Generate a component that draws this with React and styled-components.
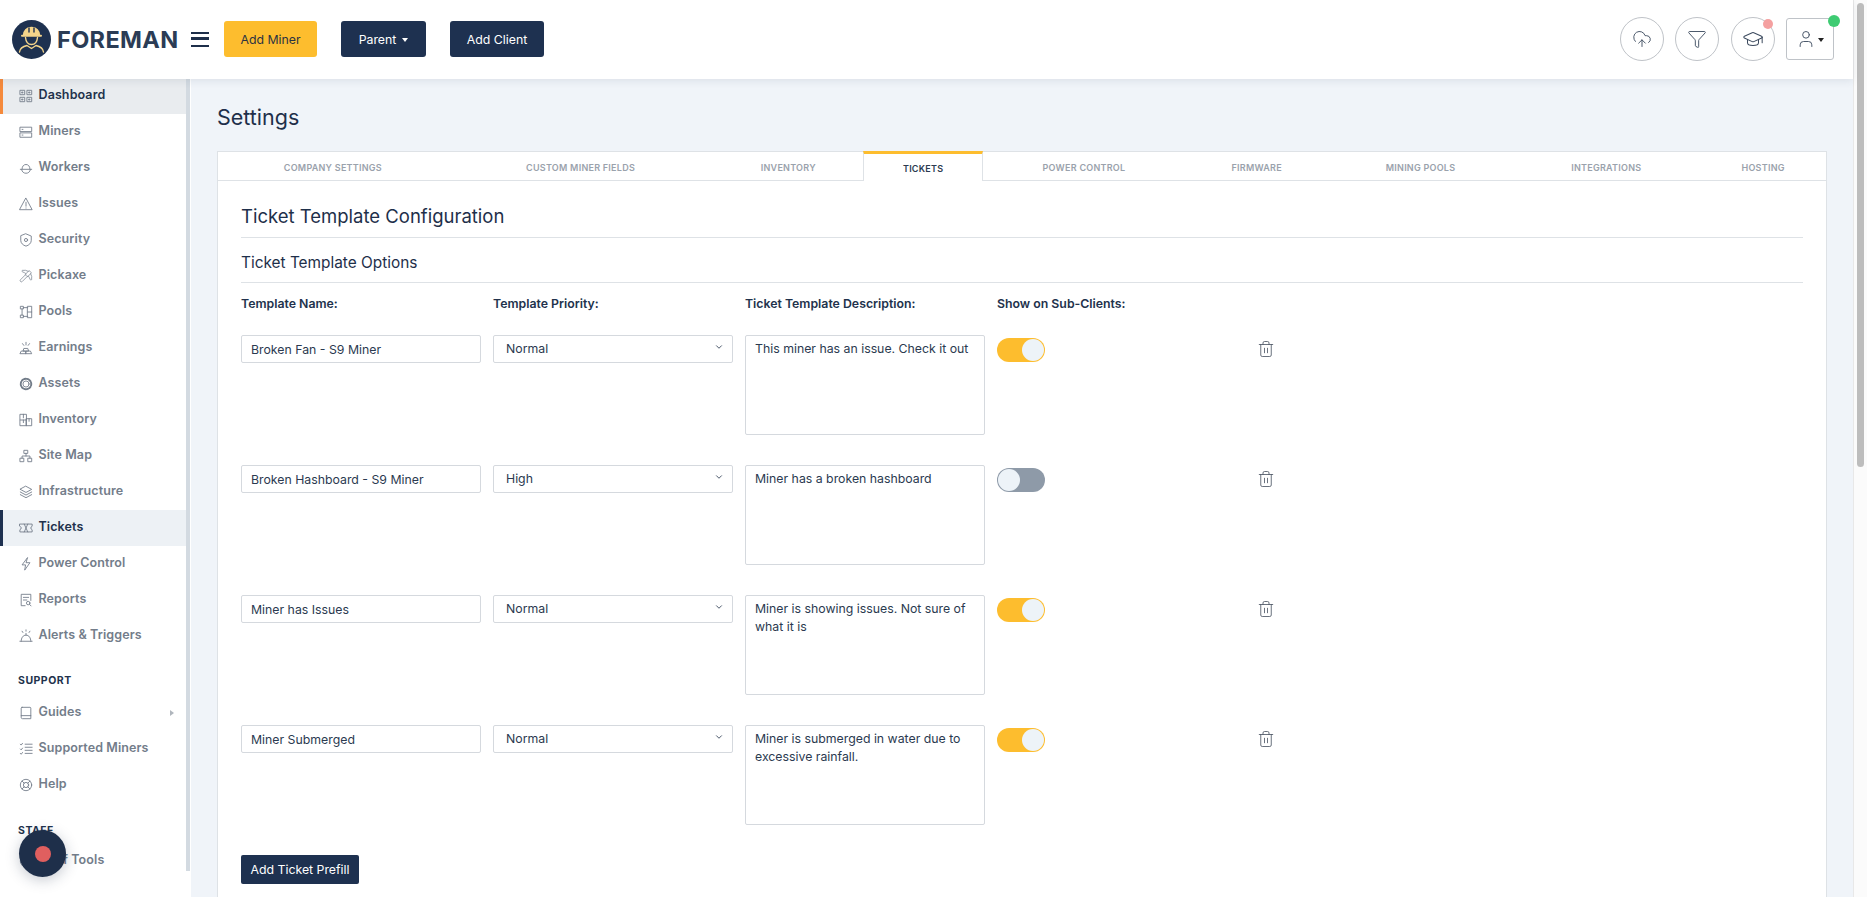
import React from "react";
import styled, { createGlobalStyle } from "styled-components";
import { CloudUpload, Funnel, GraduationCap, Pickaxe, Trash2, User, ChevronDown } from "lucide-react";

const GlobalStyle = createGlobalStyle`
  html, body {
    margin: 0;
    height: 100%;
    overflow: hidden;
    font-family: Inter, "Liberation Sans", sans-serif;
    color: #1e2f4a;
  }
  * { box-sizing: border-box; }
`;

const Shell = styled.div`
  display: flex;
  height: 897px;
  overflow: hidden;
  background: #f0f4f9;
`;

const Page = styled.div`
  flex: 1;
  min-width: 0;
  display: flex;
  flex-direction: column;
`;

const PageTrack = styled.div`
  width: 14px;
  padding: 3px 3px 0;
  background: #fbfbfb;
  border-left: 1px solid #e8e8e8;
`;

const PageThumb = styled.div`
  height: 464px;
  border-radius: 4px;
  background: #bdbdbd;
`;

const Header = styled.header`
  position: relative;
  z-index: 2;
  flex: none;
  height: 79px;
  display: flex;
  align-items: center;
  padding: 0 19px 1px 12px;
  background: #fff;
  box-shadow: 0 2px 8px rgba(40, 60, 90, 0.1);
`;

const Brand = styled.div`
  display: flex;
  align-items: center;
  gap: 6px;
  margin-right: 13px;
`;

const BrandName = styled.span`
  width: 121px;
  font-size: 23.5px;
  font-weight: 700;
  letter-spacing: 0.35px;
  white-space: nowrap;
  color: #2b3c55;
`;

const Burger = styled.div`
  width: 18px;
  height: 15px;
  margin-right: 15px;
  border-top: 2.5px solid #1e2f4a;
  border-bottom: 2.5px solid #1e2f4a;
  position: relative;

  &::after {
    content: "";
    position: absolute;
    left: 0;
    right: 0;
    top: 3.5px;
    height: 2.5px;
    background: #1e2f4a;
  }
`;

const TopButton = styled.button`
  height: 36px;
  width: ${(p) => p.$width}px;
  margin-right: 24px;
  border: 0;
  border-radius: 3px;
  font: 400 12.3px Inter, sans-serif;
  color: ${(p) => (p.$yellow ? "#2b3242" : "#fff")};
  background: ${(p) => (p.$yellow ? "#fdbd2e" : "#1e3150")};
  display: flex;
  align-items: center;
  justify-content: center;
  gap: 6px;
`;

const Caret = styled.span`
  width: 0;
  height: 0;
  border-left: 3px solid transparent;
  border-right: 3px solid transparent;
  border-top: 4px solid ${(p) => p.$color};
  margin-top: 2px;
`;

const HeaderTools = styled.div`
  margin-left: auto;
  display: flex;
  align-items: center;
  gap: 11.5px;
`;

const RoundTool = styled.div`
  position: relative;
  width: 44px;
  height: 44px;
  border: 1px solid #bfc3c8;
  border-radius: 50%;
  display: flex;
  align-items: center;
  justify-content: center;
  color: #3c4a5e;
`;

const UserBox = styled.div`
  position: relative;
  width: 48px;
  height: 42px;
  border: 1px solid #bfc3c8;
  border-radius: 3px;
  display: flex;
  align-items: center;
  justify-content: center;
  gap: 2px;
  color: #3c4a5e;
`;

const Dot = styled.span`
  position: absolute;
  width: ${(p) => p.$size}px;
  height: ${(p) => p.$size}px;
  top: ${(p) => p.$top}px;
  right: ${(p) => p.$right}px;
  border-radius: 50%;
  background: ${(p) => p.$color};
`;

const Body = styled.div`
  flex: 1;
  min-height: 0;
  display: flex;
`;

const Sidebar = styled.aside`
  flex: none;
  width: 191px;
  display: flex;
  background: #fff;
  margin-top: -1px;
`;

const SideList = styled.nav`
  width: 186px;
`;

const SideBar = styled.div`
  width: 4px;
  height: 793px;
  background: #d3dae1;
`;

const NavRow = styled.div`
  height: 36px;
  display: flex;
  align-items: center;
  gap: 5.5px;
  padding-left: ${(p) => (p.$accent ? 16 : 19)}px;
  border-left: ${(p) => (p.$accent ? `3px solid ${p.$accent}` : "0")};
  background: ${(p) => p.$bg || "transparent"};
  color: ${(p) => (p.$accent ? "#22324c" : "#737d8a")};
  font-size: 12.5px;
  font-weight: 600;
  letter-spacing: 0.1px;

  svg {
    flex: none;
    color: #727c89;
  }
`;

const NavLabel = styled.span`
  padding-bottom: 4px;
`;

const NavArrow = styled.span`
  margin-left: auto;
  margin-right: 12px;
  width: 0;
  height: 0;
  border-top: 3px solid transparent;
  border-bottom: 3px solid transparent;
  border-left: 4px solid #b0b6bd;
`;

const NavHeading = styled.div`
  padding-left: 18px;
  font-size: 10.5px;
  font-weight: 700;
  letter-spacing: 0.5px;
  line-height: 14px;
  color: #22324c;
  margin: ${(p) => p.$margin};
`;

const RecordButton = styled.div`
  position: fixed;
  left: 19px;
  top: 830px;
  z-index: 3;
  width: 47px;
  height: 47px;
  border-radius: 50%;
  background: #1e2f4a;
  box-shadow: 0 3px 14px rgba(30, 47, 74, 0.25);
  display: flex;
  align-items: center;
  justify-content: center;

  &::after {
    content: "";
    width: 16px;
    height: 16px;
    border-radius: 50%;
    background: #e05f5f;
  }
`;

const Main = styled.main`
  flex: 1;
  min-width: 0;
  padding: 24px 26px 0;
  overflow: hidden;
`;

const PageTitle = styled.h1`
  margin: 0 0 20px;
  font-size: 21.5px;
  line-height: 28px;
  font-weight: 400;
  color: #1e2f4a;
`;

const Panel = styled.section`
  background: #fff;
  border: 1px solid #dee2e6;
  padding-bottom: 40px;
`;

const Tabs = styled.div`
  display: flex;
  height: 29px;
  border-bottom: 1px solid #dee2e6;
`;

const Tab = styled.div`
  flex: ${(p) => p.$width} 1 0;
  display: flex;
  align-items: center;
  justify-content: center;
  height: ${(p) => (p.$active ? "30px" : "28px")};
  margin-top: ${(p) => (p.$active ? "-1px" : "0")};
  padding-top: ${(p) => (p.$active ? "1px" : "3px")};
  background: #fff;
  border-top: ${(p) => (p.$active ? "3px solid #fdbd2e" : "0")};
  border-left: ${(p) => (p.$active ? "1px solid #dee2e6" : "0")};
  border-right: ${(p) => (p.$active ? "1px solid #dee2e6" : "0")};
  color: ${(p) => (p.$active ? "#2b3a50" : "#9aa2ac")};
  font-size: 9px;
  font-weight: 600;
  letter-spacing: 0.25px;
  text-transform: uppercase;
`;

const Content = styled.div`
  padding: 23px 23px 0;
`;

const ConfigTitle = styled.h2`
  margin: 0 0 9px;
  font-size: 18.5px;
  line-height: 24px;
  font-weight: 400;
  color: #1e2f4a;
`;

const OptionsTitle = styled.h3`
  margin: 13px 0 7px;
  font-size: 15.4px;
  line-height: 24px;
  font-weight: 400;
  color: #1e2f4a;
`;

const Rule = styled.hr`
  margin: 0;
  border: 0;
  height: 1px;
  background: #dee2e6;
`;

const Grid = styled.div`
  display: grid;
  grid-template-columns: repeat(4, 240px) 60px;
  column-gap: 12px;
  margin-bottom: ${(p) => p.$gap}px;
`;

const ColumnLabel = styled.div`
  margin-top: 13px;
  font-size: 12.3px;
  line-height: 16px;
  font-weight: 600;
  color: #22324c;
`;

const fieldStyles = `
  width: 100%;
  border: 1px solid #d5d9de;
  border-radius: 2px;
  background: #fff;
  font: 400 12.3px/18px Inter, sans-serif;
  color: #2b3a50;
  outline: none;
`;

const TextInput = styled.input`
  ${fieldStyles}
  display: block;
  height: 28px;
  padding: 0 9px;
`;

const SelectWrap = styled.div`
  position: relative;
  height: 28px;

  svg {
    position: absolute;
    right: 9px;
    top: 7px;
    color: #3c4a5e;
  }
`;

const Select = styled.select`
  ${fieldStyles}
  appearance: none;
  height: 28px;
  padding: 0 12px;
`;

const TextArea = styled.textarea`
  ${fieldStyles}
  display: block;
  height: 100px;
  padding: 4px 9px;
  resize: none;
  overflow: hidden;
`;

const Toggle = styled.div`
  width: 48px;
  height: 24px;
  margin-top: 2.5px;
  border-radius: 12px;
  padding: 1px;
  display: flex;
  justify-content: ${(p) => (p.$on ? "flex-end" : "flex-start")};
  background: ${(p) => (p.$on ? "#fdbd2e" : "#8e9aa8")};

  &::after {
    content: "";
    width: 22px;
    height: 22px;
    border-radius: 50%;
    background: #edf3f8;
  }
`;

const TrashCell = styled.div`
  padding: 5px 0 0 8px;
  color: #4a5462;
`;

const AddButton = styled.button`
  display: block;
  width: 118px;
  height: 29px;
  margin-top: 1px;
  border: 0;
  border-radius: 2px;
  background: #1e3150;
  color: #fff;
  font: 400 12.3px Inter, sans-serif;
`;

const Logo = () => (
  <svg width="39" height="39" viewBox="0 0 39 39" fill="none">
    <circle cx="19.5" cy="19.5" r="19.5" fill="#1e3150" />
    <g stroke="#f4d48a" strokeWidth="1.4" strokeLinecap="round" strokeLinejoin="round">
      <path d="M11.5 15.5c0-4.6 3.3-8 8-8s8 3.4 8 8" fill="#f4d48a" />
      <path d="M10 15.8h19" strokeWidth="2" />
      <path d="M17 8v4M22 8v4" stroke="#1e3150" />
      <path d="M13.5 17.5c.4 4.5 2.8 7 6 7s5.6-2.5 6-7" />
      <path d="M7.5 32c.5-3.8 3-5.5 7.5-6.5l4.5 3 4.5-3c4.5 1 7 2.7 7.5 6.5" />
    </g>
  </svg>
);

const Ico = ({ children }) => (
  <svg width="14" height="14" viewBox="0 0 16 16" fill="none" stroke="currentColor" strokeWidth="1" strokeLinecap="round" strokeLinejoin="round">
    {children}
  </svg>
);

const icons = {
  dashboard: (
    <>
      <path d="M1.5 1.5h5v5h-5zM9.5 1.5h5v5h-5zM1.5 9.5h5v5h-5zM9.5 9.500h5v5h-5z" />
      <path d="M3.5 3.5h1v1h-1zM11.5 3.5h1v1h-1zM3.5 11.5h1v1h-1zM11.5 11.5h1v1h-1z" />
    </>
  ),
  miners: <path d="M1.5 2.5h13v5h-13zM1.5 9h13v5h-13zM3.5 5h1M3.5 11.5h1" />,
  workers: (
    <>
      <path d="M3.5 9c0-3 2-5 4.5-5s4.5 2 4.5 5M1.5 9.5h13" />
      <path d="M3 10c.5 2.5 2.5 4 5 4s4.5-1.500 5-4" />
    </>
  ),
  issues: <path d="M8 1.5L15 14.5H1zM8 6v4.5M8 12.5v.2" />,
  security: (
    <>
      <path d="M8 1l6 2.5v5c0 3-2.5 5.5-6 6.5-3.5-1-6-3.5-6-6.5v-5z" />
      <circle cx="8" cy="8" r="1.8" />
    </>
  ),
  pools: (
    <>
      <path d="M2 1.5h3v3h-3zM2 11.5h3v3h-3zM10 1.5h4.5v13h-4.5zM5 3h5M5 13h5M3.5 4.5v7" />
      <path d="M10 8h4.5" />
    </>
  ),
  earnings: (
    <>
      <path d="M6 8.5h4l1 3h-6zM3 11.5h4.5l.5 3h-6.5zM8.5 11.5h4.5l1.5 3h-6.5z" />
      <path d="M8 1.5v3M4 3l1.5 2M12 3l-1.5 2" />
    </>
  ),
  assets: (
    <>
      <circle cx="8" cy="8" r="3.5" />
      <circle cx="8" cy="8" r="6" strokeDasharray="1.8 1.4" strokeWidth="2.2" />
    </>
  ),
  inventory: <path d="M1.5 1.5h7v13h-7zM8.5 6.5h6v8h-6zM1.5 8h7M5 1.5v4M11.5 6.5v3M5 8v3" />,
  sitemap: (
    <path d="M6 1.5h4v3.5h-4zM1.5 10.5h4v4h-4zM10.5 10.5h4v4h-4zM3.5 10.5v-2.5h9v2.5M8 5v3" />
  ),
  infra: <path d="M8 1.5l6.5 3.5-6.5 3.5-6.5-3.5zM1.5 8l6.5 3.5 6.5-3.5M1.5 11l6.5 3.5 6.5-3.5" />,
  tickets: (
    <path d="M1 3.5h14v2.5c-1 .5-1.5 1-1.5 2s.5 1.5 1.5 2v2.5h-14v-2.5c1-.5 1.5-1 1.5-2s-.5-1.5-1.5-2zM6 3.5l4 9M10 3.5l-4 9" />
  ),
  power: <path d="M9.5 1L3.5 9h4l-1 6 6-8.5h-4z" />,
  reports: (
    <>
      <path d="M7 14.5h-4.5v-13h11v7M5 5h6M5 8h4" />
      <circle cx="10.5" cy="11.5" r="2" />
      <path d="M12 13l1.8 1.8" />
    </>
  ),
  alerts: (
    <path d="M1 14h14M2.5 14c0-4 2.2-7 5.5-7s5.500 3 5.500 7M8 5v2M8 1v1.5M3.5 2.5l1 1.5M12.5 2.5l-1 1.5" />
  ),
  guides: <path d="M3.5 1.5h9a1 1 0 0 1 1 1v12h-9.5a1.5 1.5 0 0 1-1.5-1.5v-10.5a1 1 0 0 1 1-1zM2.500 11h11" />,
  supported: (
    <path d="M7 2.5h8M7 6h8M7 9.5h8M7 13h8M1.5 2.5l1 1 1.5-2M1.5 8l1 1 1.5-2M1.5 13l1 1 1.5-2" />
  ),
  help: (
    <>
      <circle cx="8" cy="8" r="6.5" />
      <circle cx="8" cy="8" r="3" />
      <path d="M3.5 3.5l2.4 2.4M12.5 3.5l-2.4 2.4M3.5 12.5l2.4-2.4M12.5 12.5l-2.4-2.4" />
    </>
  ),
};

const mainNav = [
  ["Dashboard", "dashboard"],
  ["Miners", "miners"],
  ["Workers", "workers"],
  ["Issues", "issues"],
  ["Security", "security"],
  ["Pickaxe", "pickaxe"],
  ["Pools", "pools"],
  ["Earnings", "earnings"],
  ["Assets", "assets"],
  ["Inventory", "inventory"],
  ["Site Map", "sitemap"],
  ["Infrastructure", "infra"],
  ["Tickets", "tickets"],
  ["Power Control", "power"],
  ["Reports", "reports"],
  ["Alerts & Triggers", "alerts"],
];

const accents = {
  Dashboard: { accent: "#f58a3c", bg: "#e9ecef" },
  Tickets: { accent: "#1e3150", bg: "#edf1f5" },
};

const tabs = [
  ["Company Settings", 230],
  ["Custom Miner Fields", 266],
  ["Inventory", 150],
  ["Tickets", 118],
  ["Power Control", 202],
  ["Firmware", 144],
  ["Mining Pools", 184],
  ["Integrations", 188],
  ["Hosting", 126],
];

const templates = [
  { name: "Broken Fan - S9 Miner", priority: "Normal", text: "This miner has an issue. Check it out", on: true },
  { name: "Broken Hashboard - S9 Miner", priority: "High", text: "Miner has a broken hashboard", on: false },
  { name: "Miner has Issues", priority: "Normal", text: "Miner is showing issues. Not sure of what it is", on: true },
  { name: "Miner Submerged", priority: "Normal", text: "Miner is submerged in water due to excessive rainfall.", on: true },
];

const NavItem = ({ label, icon, arrow }) => {
  const style = accents[label] || {};
  return (
    <NavRow $accent={style.accent} $bg={style.bg}>
      {icon === "pickaxe" ? <Pickaxe size={14} strokeWidth={1.2} /> : <Ico>{icons[icon]}</Ico>}
      <NavLabel>{label}</NavLabel>
      {arrow && <NavArrow />}
    </NavRow>
  );
};

export default function App() {
  return (
    <Shell>
      <GlobalStyle />
      <Page>
        <Header>
          <Brand>
            <Logo />
            <BrandName>FOREMAN</BrandName>
          </Brand>
          <Burger />
          <TopButton $yellow $width={93}>Add Miner</TopButton>
          <TopButton $width={85}>
            Parent <Caret $color="#fff" />
          </TopButton>
          <TopButton $width={94}>Add Client</TopButton>
          <HeaderTools>
            <RoundTool>
              <CloudUpload size={20} strokeWidth={1.1} />
            </RoundTool>
            <RoundTool>
              <Funnel size={20} strokeWidth={1.1} />
            </RoundTool>
            <RoundTool>
              <GraduationCap size={22} strokeWidth={1.1} />
              <Dot $size={10} $color="#f4a0a0" $top={1} $right={1} />
            </RoundTool>
            <UserBox>
              <User size={20} strokeWidth={1.1} />
              <Caret $color="#222" />
              <Dot $size={12} $color="#3ecb72" $top={-4} $right={-7} />
            </UserBox>
          </HeaderTools>
        </Header>
        <Body>
          <Sidebar>
            <SideList>
              {mainNav.map(([label, icon]) => (
                <NavItem key={label} label={label} icon={icon} />
              ))}
              <NavHeading $margin="20px 0 7px">SUPPORT</NavHeading>
              <NavItem label="Guides" icon="guides" arrow />
              <NavItem label="Supported Miners" icon="supported" />
              <NavItem label="Help" icon="help" />
              <NavHeading $margin="21px 0 5px">STAFF</NavHeading>
              <NavItem label="Staff Tools" icon="help" />
            </SideList>
            <SideBar />
          </Sidebar>
          <Main>
            <PageTitle>Settings</PageTitle>
            <Panel>
              <Tabs>
                {tabs.map(([label, width]) => (
                  <Tab key={label} $width={width} $active={label === "Tickets"}>
                    {label}
                  </Tab>
                ))}
              </Tabs>
              <Content>
                <ConfigTitle>Ticket Template Configuration</ConfigTitle>
                <Rule />
                <OptionsTitle>Ticket Template Options</OptionsTitle>
                <Rule />
                <Grid $gap={23}>
                  <ColumnLabel>Template Name:</ColumnLabel>
                  <ColumnLabel>Template Priority:</ColumnLabel>
                  <ColumnLabel>Ticket Template Description:</ColumnLabel>
                  <ColumnLabel>Show on Sub-Clients:</ColumnLabel>
                </Grid>
                {templates.map((t) => (
                  <Grid key={t.name} $gap={30}>
                    <TextInput defaultValue={t.name} />
                    <SelectWrap>
                      <Select defaultValue={t.priority}>
                        <option>Normal</option>
                        <option>High</option>
                        <option>Low</option>
                      </Select>
                      <ChevronDown size={10} strokeWidth={2.2} />
                    </SelectWrap>
                    <TextArea defaultValue={t.text} />
                    <Toggle $on={t.on} />
                    <TrashCell>
                      <Trash2 size={18} strokeWidth={1.1} />
                    </TrashCell>
                  </Grid>
                ))}
                <AddButton>Add Ticket Prefill</AddButton>
              </Content>
            </Panel>
          </Main>
        </Body>
      </Page>
      <PageTrack>
        <PageThumb />
      </PageTrack>
      <RecordButton />
    </Shell>
  );
}
